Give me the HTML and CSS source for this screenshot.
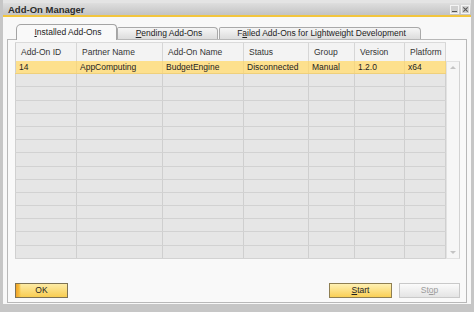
FILE: index.html
```html
<!DOCTYPE html>
<html lang="en">
<head>
    <meta charset="UTF-8">
    <title>Add-On Manager</title>
    <link rel="stylesheet" href="styles.css">
</head>
<body>
    <div class="window">
        <div class="titlebar">
            <span class="title">Add-On Manager</span>
            <div class="controls">
                <span class="ctl ctl-min"></span>
                <span class="ctl ctl-close">
                    <svg width="8" height="8" viewBox="0 0 8 8"><path d="M1.5 1.5 L6.5 6.5 M6.5 1.5 L1.5 6.5" stroke="#555" stroke-width="1.2"/></svg>
                </span>
            </div>
        </div>

        <div class="content">
            <div class="tabs">
                <div class="tab active tab1"><u>I</u>nstalled Add-Ons</div>
                <div class="tab tab2"><u>P</u>ending Add-Ons</div>
                <div class="tab tab3">F<u>a</u>iled Add-Ons for Lightweight Development</div>
            </div>

            <div class="panel">
                <div class="grid-wrap">
                    <div class="grid">
                        <div class="row head">
                            <div class="cell">Add-On ID</div>
                            <div class="cell">Partner Name</div>
                            <div class="cell">Add-On Name</div>
                            <div class="cell">Status</div>
                            <div class="cell">Group</div>
                            <div class="cell">Version</div>
                            <div class="cell">Platform</div>
                        </div>
                        <div class="row selected">
                            <div class="cell">14</div>
                            <div class="cell">AppComputing</div>
                            <div class="cell">BudgetEngine</div>
                            <div class="cell">Disconnected</div>
                            <div class="cell">Manual</div>
                            <div class="cell">1.2.0</div>
                            <div class="cell">x64</div>
                        </div>
                        <div class="row"><div class="cell"></div><div class="cell"></div><div class="cell"></div><div class="cell"></div><div class="cell"></div><div class="cell"></div><div class="cell"></div></div>
                        <div class="row"><div class="cell"></div><div class="cell"></div><div class="cell"></div><div class="cell"></div><div class="cell"></div><div class="cell"></div><div class="cell"></div></div>
                        <div class="row"><div class="cell"></div><div class="cell"></div><div class="cell"></div><div class="cell"></div><div class="cell"></div><div class="cell"></div><div class="cell"></div></div>
                        <div class="row"><div class="cell"></div><div class="cell"></div><div class="cell"></div><div class="cell"></div><div class="cell"></div><div class="cell"></div><div class="cell"></div></div>
                        <div class="row"><div class="cell"></div><div class="cell"></div><div class="cell"></div><div class="cell"></div><div class="cell"></div><div class="cell"></div><div class="cell"></div></div>
                        <div class="row"><div class="cell"></div><div class="cell"></div><div class="cell"></div><div class="cell"></div><div class="cell"></div><div class="cell"></div><div class="cell"></div></div>
                        <div class="row"><div class="cell"></div><div class="cell"></div><div class="cell"></div><div class="cell"></div><div class="cell"></div><div class="cell"></div><div class="cell"></div></div>
                        <div class="row"><div class="cell"></div><div class="cell"></div><div class="cell"></div><div class="cell"></div><div class="cell"></div><div class="cell"></div><div class="cell"></div></div>
                        <div class="row"><div class="cell"></div><div class="cell"></div><div class="cell"></div><div class="cell"></div><div class="cell"></div><div class="cell"></div><div class="cell"></div></div>
                        <div class="row"><div class="cell"></div><div class="cell"></div><div class="cell"></div><div class="cell"></div><div class="cell"></div><div class="cell"></div><div class="cell"></div></div>
                        <div class="row"><div class="cell"></div><div class="cell"></div><div class="cell"></div><div class="cell"></div><div class="cell"></div><div class="cell"></div><div class="cell"></div></div>
                        <div class="row"><div class="cell"></div><div class="cell"></div><div class="cell"></div><div class="cell"></div><div class="cell"></div><div class="cell"></div><div class="cell"></div></div>
                        <div class="row"><div class="cell"></div><div class="cell"></div><div class="cell"></div><div class="cell"></div><div class="cell"></div><div class="cell"></div><div class="cell"></div></div>
                        <div class="row"><div class="cell"></div><div class="cell"></div><div class="cell"></div><div class="cell"></div><div class="cell"></div><div class="cell"></div><div class="cell"></div></div>
                    </div>
                    <div class="scrollbar">
                        <span class="arrow up"></span>
                        <span class="arrow down"></span>
                    </div>
                </div>

                <div class="buttons">
                    <button class="btn ok">OK</button>
                    <div class="btn-group">
                        <button class="btn start"><u>S</u>tart</button>
                        <button class="btn stop" disabled>St<u>o</u>p</button>
                    </div>
                </div>
            </div>
        </div>
    </div>
</body>
</html>
```

FILE: styles.css
```css
* {
    margin: 0;
    padding: 0;
    box-sizing: border-box;
}

body {
    background: #c6c6c6;
    font-family: 'Liberation Sans', Arial, sans-serif;
    font-size: 8.5px;
    color: #222;
}

.window {
    margin: 0 3px;
    height: 304px;
    background: #f8f8f8;
    display: flex;
    flex-direction: column;
}

/* title bar */
.titlebar {
    height: 17px;
    border-top: 3px solid #e4e4e4;
    border-bottom: 2px solid #f2c53d;
    background: linear-gradient(#dedede, #c3c3c3);
    display: flex;
    align-items: center;
    justify-content: space-between;
    padding: 0 1px 0 5px;
}

.title {
    font-weight: bold;
    font-size: 9.5px;
    color: #2b2b2b;
}

.controls {
    display: flex;
    gap: 2px;
    margin-top: 1px;
}

.ctl {
    width: 9px;
    height: 9px;
    border: 1px solid #f4f4f4;
    background: #d0d0d0;
    display: flex;
    align-items: center;
    justify-content: center;
}

.ctl-min {
    align-items: flex-end;
}

.ctl-min::after {
    content: "";
    width: 5px;
    height: 1px;
    background: #555;
    margin-bottom: 1px;
}

.ctl svg {
    width: 7px;
    height: 7px;
}

/* tabs */
.content {
    flex: 1;
    padding: 7px 4px 1px 4px;
    display: flex;
    flex-direction: column;
}

.tabs {
    display: flex;
    align-items: flex-end;
    height: 16px;
    padding-left: 9px;
    margin-bottom: -1px;
    position: relative;
    z-index: 1;
}

.tab {
    height: 12px;
    margin-bottom: 1px;
    border: 1px solid #a9a9a9;
    border-bottom: none;
    border-radius: 2px 4px 0 0;
    background: linear-gradient(#f6f6f6, #dcdcdc);
    text-align: center;
    line-height: 11px;
    padding-left: 3px;
    white-space: nowrap;
    color: #222;
}

.tab.active {
    height: 16px;
    margin-bottom: 0;
    background: #f9f9f9;
    border-color: #a4a4a4;
    border-radius: 5px 4px 0 0;
    line-height: 14px;
}

.tab1 { width: 101px; }
.tab2 { width: 101px; }
.tab3 { width: 202px; margin-left: 1px; }

/* panel */
.panel {
    border: 1px solid #b8b8b8;
    background: #f9f9f9;
    padding: 2px 6px 4px 7px;
}

.grid-wrap {
    display: flex;
    height: 217px;
}

.grid {
    width: 431px;
}

.row {
    display: grid;
    grid-template-columns: 62px 86px 81px 65px 46px 50px 41px;
    height: 13.2px;
    background: #e6e6e6;
    border-bottom: 1px solid #d2d2d2;
}

.row.head {
    height: 19px;
    background: #f3f3f3;
    border-top: 1px solid #dadada;
    border-bottom: none;
}

.cell {
    border-right: 1px solid #cfcfcf;
    padding-left: 3px;
    line-height: 12px;
    white-space: nowrap;
    overflow: hidden;
}

.cell:first-child {
    border-left: 1px solid #d0d0d0;
}

.head .cell {
    line-height: 18px;
    padding-left: 5px;
    color: #333;
    border-right-color: #d6d6d6;
}

.row.selected {
    background: #fde08d;
    border-bottom-color: #efd07c;
}

.selected .cell {
    border-right-color: #f4d684;
    color: #1e1e1e;
}

.scrollbar {
    width: 14px;
    margin-top: 19px;
    height: 198px;
    background: #f6f6f6;
    border: 1px solid #e2e2e2;
    border-right-color: #d2d2d2;
    display: flex;
    flex-direction: column;
    justify-content: space-between;
    align-items: center;
    padding: 4px 0;
}

.arrow {
    width: 0;
    height: 0;
    border-left: 3px solid transparent;
    border-right: 3px solid transparent;
}

.arrow.up {
    border-bottom: 3px solid #c4c4c4;
}

.arrow.down {
    border-top: 3px solid #c4c4c4;
}

/* buttons */
.buttons {
    margin-top: 24px;
    display: flex;
    justify-content: space-between;
}

.btn-group {
    display: flex;
    gap: 7px;
}

.btn {
    height: 15px;
    font-family: inherit;
    font-size: 8.5px;
    color: #222;
    border: 1px solid #8f7f52;
    background: linear-gradient(#fff1b4, #f9cf55);
    line-height: 13px;
    text-align: center;
}

.btn.ok {
    width: 53px;
    border-color: #7e7354;
    background: linear-gradient(to right, #f0a22a 0, #f6bd3c 3px, rgba(0, 0, 0, 0) 5px),
                linear-gradient(#fdeba6, #f8cd52);
}

.btn.start {
    width: 63px;
}

.btn.stop {
    width: 61px;
    border-color: #c9c9c9;
    background: linear-gradient(#fbfbfb, #e4e4e4);
    color: #9b9b9b;
}
```
